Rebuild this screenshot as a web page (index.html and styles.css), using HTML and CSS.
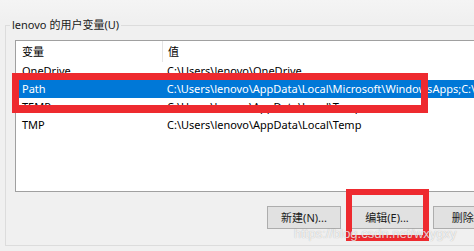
FILE: index.html
```html
<!DOCTYPE html>
<html>
<head>
	<meta charset="utf-8">
	<title>环境变量</title>
	<link rel="stylesheet" href="styles.css">
</head>
<body>
	<div class="window">
		<div class="group">
			<div class="groupTitle">lenovo 的用户变量(U)</div>
			<div class="listBox">
				<div class="row head">
					<div class="colName">变量</div>
					<div class="colValue">值</div>
				</div>
				<div class="row">
					<div class="colName">OneDrive</div>
					<div class="colValue">C:\Users\lenovo\OneDrive</div>
				</div>
				<div class="row selected">
					<div class="colName">Path</div>
					<div class="colValue">C:\Users\lenovo\AppData\Local\Microsoft\WindowsApps;C:\...</div>
				</div>
				<div class="row">
					<div class="colName">TEMP</div>
					<div class="colValue">C:\Users\lenovo\AppData\Local\Temp</div>
				</div>
				<div class="row">
					<div class="colName">TMP</div>
					<div class="colValue">C:\Users\lenovo\AppData\Local\Temp</div>
				</div>
			</div>
			<div class="buttonRow">
				<div class="btn">新建(N)...</div>
				<div class="btn">编辑(E)...</div>
				<div class="btn">删除(D)</div>
			</div>
		</div>

		<!-- annotations drawn over the dialog -->
		<div class="mark markPath"></div>
		<div class="mark markEdit"></div>
		<div class="watermark">https://blog.csdn.net/wxygxy</div>
	</div>
</body>
</html>
```

FILE: styles.css
```css
body { margin: 0; padding: 0; background-color: #f0f0f0; font: normal 11px "Noto Sans", "Noto Sans CJK SC", sans-serif; color: #000; }

.window {
	position: relative;
	width: 474px;
	height: 251px;
	overflow: hidden;
	padding: 25px 0 0 5px;
	box-sizing: border-box;
	background: linear-gradient(#f4f4f4, #f0f0f0 20px);
}

.group {
	width: 480px;
	height: 221px;
	box-sizing: border-box;
	border: 1px solid #dcdcdc;
	border-right: none;
	display: flex;
	flex-direction: column;
	align-items: flex-start;
}

.groupTitle {
	margin: -9px 0 0 4px;
	padding: 0 2px;
	line-height: 16px;
	background-color: #f0f0f0;
	color: #1a1a1a;
}

.listBox {
	margin: 7px 0 0 9px;
	width: 470px;
	height: 152px;
	box-sizing: border-box;
	border: 1px solid #a0a0a0;
	background-color: #fff;
}

.row { display: flex; height: 18px; line-height: 18px; white-space: nowrap; }
.row.head { height: 21px; line-height: 21px; }
.colName { width: 146px; padding-left: 6px; box-sizing: border-box; }
.colValue { padding-left: 5px; }
.head .colValue { border-left: 1px solid #e5e5e5; }
.row.selected { background-color: #0078d7; color: #fff; }

.buttonRow { display: flex; gap: 9px; margin: 14px 0 0 261px; }
.btn {
	width: 74px;
	height: 23px;
	line-height: 21px;
	box-sizing: border-box;
	border: 1px solid #adadad;
	background-color: #e1e1e1;
	text-align: center;
	color: #1a1a1a;
}

.mark { position: absolute; border: 7px solid #ee2a2f; box-sizing: border-box; }
.markPath { left: 12px; top: 73px; width: 416px; height: 40px; border-bottom-width: 8px; }
.markEdit { left: 346px; top: 189px; width: 83px; height: 52px; border-width: 6px; }

.watermark {
	position: absolute;
	left: 294px;
	top: 226px;
	font: normal 13px "Liberation Sans", sans-serif;
	color: rgba(255, 255, 255, 0.8);
	text-shadow: 0 0 1px rgba(0, 0, 0, 0.3);
}
```
